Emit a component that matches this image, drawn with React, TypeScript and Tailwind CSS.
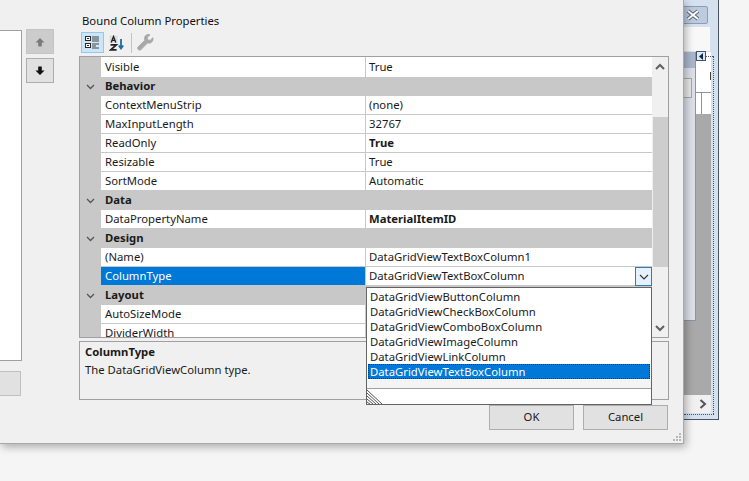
import React from "react";

type Row = { k: string; v?: string; bold?: boolean; cat?: boolean; sel?: boolean };
const rows: Row[] = [
  { k: "Behavior", cat: true },
  { k: "ContextMenuStrip", v: "(none)" },
  { k: "MaxInputLength", v: "32767" },
  { k: "ReadOnly", v: "True", bold: true },
  { k: "Resizable", v: "True" },
  { k: "SortMode", v: "Automatic" },
  { k: "Data", cat: true },
  { k: "DataPropertyName", v: "MaterialItemID", bold: true },
  { k: "Design", cat: true },
  { k: "(Name)", v: "DataGridViewTextBoxColumn1" },
  { k: "ColumnType", v: "DataGridViewTextBoxColumn", sel: true },
  { k: "Layout", cat: true },
  { k: "AutoSizeMode", v: "" },
  { k: "DividerWidth", v: "" },
];

const items = [
  "DataGridViewButtonColumn",
  "DataGridViewCheckBoxColumn",
  "DataGridViewComboBoxColumn",
  "DataGridViewImageColumn",
  "DataGridViewLinkColumn",
];

const Chevron = ({ up }: { up?: boolean }) => (
  <svg width="10" height="7" viewBox="0 0 10 7">
    <path d={up ? "M1 6 L5 2 L9 6" : "M1 1 L5 5 L9 1"} fill="none" stroke="currentColor" strokeWidth="2" />
  </svg>
);

function PropRow({ r }: { r: Row }) {
  if (r.cat) {
    return (
      <div className="h-[19px] flex items-center bg-[#c8c8c8] text-[#1a1a1a]">
        <div className="w-[21px] flex justify-center text-[#555555]">
          <svg width="9" height="6" viewBox="0 0 9 6">
            <path d="M1 1 L4.5 4.5 L8 1" fill="none" stroke="currentColor" strokeWidth="1.3" />
          </svg>
        </div>
        <span className="font-bold pl-[4px]">{r.k}</span>
      </div>
    );
  }
  return (
    <div className="h-[19px] flex bg-[#c8c8c8]">
      <div className="w-[21px] shrink-0" />
      <div className="flex-1 flex bg-white border-b border-[#c8c8c8]">
        <div
          className={`w-[265px] shrink-0 pl-[4px] leading-[18px] border-r border-[#c8c8c8] ${
            r.sel ? "bg-[#0078d7] text-white" : ""
          }`}
        >
          {r.k}
        </div>
        <div className={`flex-1 pl-[3px] leading-[18px] ${r.bold ? "font-bold" : ""}`}>{r.v}</div>
      </div>
    </div>
  );
}

export default function App() {
  return (
    <div
      className="relative w-[749px] h-[481px] overflow-hidden bg-[#f5f5f5] text-[11.3px] text-[#1a1a1a]"
      style={{ fontFamily: '"Noto Sans", "Open Sans", sans-serif' }}
    >
      {/* window behind the dialog */}
      <div className="absolute left-[660px] top-0 w-[59px] h-[420px] bg-[#d6e1ef] border-r border-b border-[#4a5360]">
        <div className="absolute left-[18px] top-[6px] h-[18px] w-[30px] rounded-[2px] bg-[#bccbdf] border border-[#8d9db3] flex items-center justify-center">
          <svg width="16" height="12" viewBox="0 0 16 12">
            <path d="M3 2 L13 10 M13 2 L3 10" stroke="#5c6776" strokeWidth="4" />
            <path d="M3 2 L13 10 M13 2 L3 10" stroke="#ffffff" strokeWidth="2" />
          </svg>
        </div>
        <div className="absolute left-[24px] top-[27px] w-[26px] h-[24px] bg-[#f8f8f8]" />
        <div className="absolute left-[24px] top-[52px] w-[12px] h-[269px] bg-[#dde0e9] border-r border-b border-[#8a94a6]">
          <div className="h-[16px] bg-[#aab6cb]" />
          <div className="mt-[10px] h-[20px] w-[8px] bg-[#e8e8e8] border-y border-r border-[#a8a8a8]" />
        </div>
        <div className="absolute left-[36px] top-[52px] w-[15px] h-[62px] bg-white">
          <div className="absolute left-[14px] top-[20px] w-[1px] h-[8px] bg-[#4a4030]" />
          <div className="absolute left-0 top-[40px] w-full h-px bg-[#8a94a6]" />
          <div className="absolute left-[5px] top-[40px] w-px h-[22px] bg-[#8a94a6]" />
        </div>
        <div className="absolute left-[36px] top-[114px] w-[15px] h-[207px] bg-[#a9a9a9]" />
        <div className="absolute left-[24px] top-[321px] w-[27px] h-[74px] bg-[#a9a9a9]" />
        <div className="absolute left-[24px] top-[395px] w-[27px] h-[18px] bg-[#f0f0f0] flex justify-end items-center pr-[4px] text-[#555555]">
          <svg width="8" height="10" viewBox="0 0 8 10">
            <path d="M1.5 1 L6 5 L1.5 9" fill="none" stroke="currentColor" strokeWidth="2" />
          </svg>
        </div>
        <div className="absolute left-[53px] top-[56px] h-[358px] border-l border-dotted border-[#46566e]" />
        <div className="absolute left-[24px] top-[414px] w-[30px] border-t border-dotted border-[#46566e]" />
        <div className="absolute left-[46px] top-[56px] w-[7px] border-t border-dotted border-[#46566e]" />
        <div className="absolute left-[36px] top-[51px] w-[10px] h-[10px] bg-[#dfe9f5] border border-[#4a5360] flex items-center justify-center">
          <svg width="4" height="7" viewBox="0 0 4 7">
            <path d="M4 0 L0 3.5 L4 7 Z" fill="#0a2a4a" />
          </svg>
        </div>
      </div>

      {/* dialog */}
      <div className="absolute left-0 top-0 w-[684px] h-[444px] bg-[#f0f0f0] border-r border-b border-[#a8a8a8] shadow-[2px_3px_8px_rgba(0,0,0,0.3)] flex">
        {/* left list */}
        <div className="w-[79px] shrink-0 flex">
          <div className="w-[26px] shrink-0 pt-[30px]">
            <div className="w-[22px] h-[331px] bg-white border-r border-t border-b border-[#a0a0a0]" />
            <div className="w-[21px] h-[25px] mt-[10px] bg-[#e1e1e1] border-r border-t border-b border-[#c0c0c0]" />
          </div>
          <div className="pt-[29px] flex flex-col gap-[4px]">
            <div className="w-[28px] h-[25px] bg-[#cccccc] border border-[#c4c4c4] flex items-center justify-center">
              <svg width="10" height="10" viewBox="0 0 10 10">
                <path d="M5 1 L9.5 5.5 H6.8 V9.5 H3.2 V5.5 H0.5 Z" fill="#7a7a7a" />
              </svg>
            </div>
            <div className="w-[28px] h-[25px] bg-[#e1e1e1] border border-[#adadad] flex items-center justify-center">
              <svg width="10" height="10" viewBox="0 0 10 10">
                <path d="M5 9 L9.5 4.5 H6.8 V0.5 H3.2 V4.5 H0.5 Z" fill="#111111" />
              </svg>
            </div>
          </div>
        </div>

        {/* right */}
        <div className="w-[590px] shrink-0 flex flex-col">
          <div className="h-[14px] mt-[14px] leading-[14px] pl-[3px] text-[#111111]">Bound Column Properties</div>
          <div className="h-[21px] mt-[4px] flex items-center pl-[2px]">
            <div className="w-[23px] h-[21px] bg-[#cde6f7] border border-[#90c8f0] flex items-center justify-center">
              <svg width="15" height="13" viewBox="0 0 15 13">
                <rect x="0.5" y="0.5" width="5" height="4" fill="#fff" stroke="#2b2b2b" />
                <rect x="0.5" y="7.5" width="5" height="4" fill="#fff" stroke="#2b2b2b" />
                <path d="M2 2.5 H4 M2 9.5 H4" stroke="#2b2b2b" />
                <path d="M7 1 H14 M7 3 H14 M7 5 H14 M7 8 H14 M7 10 H11 M7 12 H14" stroke="#444" strokeWidth="1" />
              </svg>
            </div>
            <div className="w-[23px] h-[21px] ml-[1px] flex items-center justify-center">
              <svg width="16" height="16" viewBox="0 0 16 16">
                <rect x="0.5" y="0.5" width="8" height="7.5" fill="#dcdcdc" />
                <path d="M2.2 7.5 L4.5 1.5 L6.8 7.5 M3.2 5.4 H5.8" fill="none" stroke="#222" strokeWidth="1.3" />
                <path d="M1.5 9.8 H7.3 L1.8 14.8 H7.6" fill="none" stroke="#222" strokeWidth="1.7" />
                <path d="M12 4 V13.5 M9.8 10.5 L12 13.5 L14.2 10.5" fill="none" stroke="#1c6ea4" strokeWidth="1.8" />
              </svg>
            </div>
            <div className="w-px h-[20px] bg-[#c4c4c4] mx-[3px]" />
            <div className="w-[20px] h-[21px] flex items-center justify-center">
              <svg width="17" height="17" viewBox="0 0 16 16">
                <path
                  d="M15 3.5 L12.3 6 L10 5.5 L9.6 3.2 L12.2 0.8 C9.8 -0.2 7 1.4 7 4.2 C7 4.9 7.1 5.4 7.4 5.9 L1.2 11.9 C0.4 12.7 0.4 13.8 1.2 14.6 C2 15.4 3.1 15.3 3.8 14.6 L9.9 8.5 C12.7 9.3 15.8 7 15 3.5 Z"
                  fill="#a8a8a8"
                  stroke="#a8a8a8"
                  strokeWidth="0.8"
                />
              </svg>
            </div>
          </div>

          {/* property grid */}
          <div className="relative h-[282px] mt-[3px] bg-[#c8c8c8] border border-[#a0a0a0] flex overflow-hidden">
            <div className="w-[572px] shrink-0">
              <div className="h-[20px] flex bg-[#c8c8c8]">
                <div className="w-[21px] shrink-0" />
                <div className="flex-1 flex bg-white">
                  <div className="w-[265px] shrink-0 pl-[4px] leading-[19px] border-r border-[#c8c8c8]">Visible</div>
                  <div className="flex-1 pl-[3px] leading-[19px]">True</div>
                </div>
              </div>
              {rows.map((r) => (
                <PropRow key={r.k} r={r} />
              ))}
            </div>
            <div className="w-[16px] shrink-0 bg-[#f0f0f0] flex flex-col items-center">
              <div className="h-[18px] flex items-center justify-center text-[#606060]">
                <Chevron up />
              </div>
              <div className="w-[15px] h-[150px] mt-[42px] ml-[1px] bg-[#cdcdcd]" />
              <div className="h-[18px] flex items-center justify-center text-[#606060] mt-auto">
                <Chevron />
              </div>
            </div>
          </div>

          {/* description */}
          <div className="h-[59px] mt-[3px] border border-[#a0a0a0] pl-[5px] pt-[2px]">
            <div className="font-bold leading-[15px]">ColumnType</div>
            <div className="leading-[15px] mt-[3px]">The DataGridViewColumn type.</div>
          </div>

          {/* buttons */}
          <div className="flex justify-end gap-[9px] mt-[5px] pr-[1px]">
            <div className="w-[85px] h-[25px] bg-[#e1e1e1] border border-[#adadad] flex items-center justify-center">OK</div>
            <div className="w-[85px] h-[25px] bg-[#e1e1e1] border border-[#adadad] flex items-center justify-center">Cancel</div>
          </div>
        </div>

        {/* resize grip */}
        <svg className="absolute right-[1px] bottom-[1px]" width="9" height="9" viewBox="0 0 9 9">
          <path d="M6 0h2v2H6zM3 3h2v2H3zM6 3h2v2H6zM0 6h2v2H0zM3 6h2v2H3zM6 6h2v2H6z" fill="#b8b8b8" />
        </svg>

        {/* dropdown button */}
        <div className="absolute left-[635px] top-[267px] w-[17px] h-[19px] bg-[#e5f1fb] border border-[#2b7fb8] flex items-center justify-center text-[#333333]">
          <svg width="10" height="6" viewBox="0 0 10 6">
            <path d="M1 1 L5 5 L9 1" fill="none" stroke="currentColor" strokeWidth="1.1" />
          </svg>
        </div>

        {/* dropdown */}
        <div className="absolute left-[366px] top-[287px] w-[286px] h-[118px] bg-white border border-[#646464] flex flex-col">
          <div className="h-[92px] pt-[1px] px-[1px] leading-[15px] text-[#1a1a1a]">
            {items.map((t) => (
              <div key={t} className="h-[15px] pl-[2px] whitespace-nowrap">
                {t}
              </div>
            ))}
            <div className="h-[15px] pl-[1px] bg-[#0078d7] text-white border border-dotted border-[#003c6c] leading-[13px] whitespace-nowrap">
              DataGridViewTextBoxColumn
            </div>
          </div>
          <div className="h-[8px] bg-[#f4f4f4]" />
          <div className="h-px bg-[#a0a0a0]" />
          <div className="flex-1 relative">
            <svg className="absolute left-0 bottom-0" width="16" height="15" viewBox="0 0 16 15">
              <path d="M0 1 L15 15 M0 4 L12 15 M0 7 L9 15 M0 10 L6 15 M0 13 L3 15" stroke="#555555" strokeWidth="1" fill="none" />
            </svg>
          </div>
        </div>
      </div>
    </div>
  );
}
